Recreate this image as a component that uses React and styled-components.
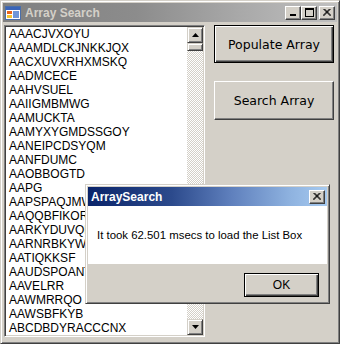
import React from "react";
import styled, { createGlobalStyle } from "styled-components";

const items = [
  "AAACJVXOYU", "AAAMDLCKJNKKJQX", "AACXUVXRHXMSKQ", "AADMCECE", "AAHVSUEL",
  "AAIIGMBMWG", "AAMUCKTA", "AAMYXYGMDSSGOY", "AANEIPCDSYQM", "AANFDUMC",
  "AAOBBOGTD", "AAPG", "AAPSPAQJMWX", "AAQQBFIKORTU", "AARKYDUVQLEP",
  "AARNRBKYWQZ", "AATIQKKSF", "AAUDSPOANTFK", "AAVELRR", "AAWMRRQO",
  "AAWSBFKYB", "ABCDBDYRACCCNX",
];

const Global = createGlobalStyle`
  html, body { margin: 0; padding: 0; background: #d4d0c8; }
  * { box-sizing: border-box; }
`;

const Stage = styled.div`position: relative;width: 340px;height: 344px;overflow: hidden;`;

const Frame = styled.div`
  width: ${(p) => p.$w}px;height: ${(p) => p.$h}px;display: flex;flex-direction: column;
  background: #d4d0c8;padding: 2px;
  border: 1px solid;border-color: #d4d0c8 #404040 #404040 #d4d0c8;
  box-shadow: inset 1px 1px #fff, inset -1px -1px #808080;
`;

const Dialog = styled(Frame)`position: absolute;left: 85px;top: 184px;`;

const TitleBar = styled.div`
  height: ${(p) => p.$h}px;flex: none;display: flex;align-items: center;padding: 0 2px;
  background: ${(p) =>
    p.$active
      ? "linear-gradient(90deg, #0a246a 0%, #2c4a8c 35%, #5f80bd 60%, #8fb3e0 85%, #a6caf0 100%)"
      : "linear-gradient(90deg, #808080 0%, #8c8c8c 40%, #a8a8a8 70%, #c0c0c0 100%)"};
  color: ${(p) => (p.$active ? "#fff" : "#d4d0c8")};
  font: bold 12px "Liberation Sans", Arial, sans-serif;
`;

const TitleText = styled.span`flex: 1;margin-left: ${(p) => p.$gap}px;white-space: nowrap;`;

const CapButton = styled.div`
  width: 16px;height: 14px;display: flex;align-items: center;justify-content: center;background: #d4d0c8;
  margin-left: ${(p) => p.$ml || 0}px;
  border: 1px solid;border-color: #fff #404040 #404040 #fff;box-shadow: inset -1px -1px #808080;
`;

const Body = styled.div`flex: 1;display: flex;padding: 3px 1px 0 1px;gap: 8px;min-height: 0;`;

const ListBox = styled.div`
  width: 201px;height: 312px;display: flex;background: #fff;
  border: 1px solid;border-color: #808080 #fff #fff #808080;
  box-shadow: inset 1px 1px #404040, inset -1px -1px #d4d0c8;padding: 1px;
`;

const Rows = styled.div`flex: 1;overflow: hidden;`;

const Row = styled.div`
  height: 14px;padding-left: 3px;white-space: nowrap;
  font: 12px/14px "Liberation Sans", Arial, sans-serif;color: #000;
`;

const ScrollBar = styled.div`width: 16px;display: flex;flex-direction: column;`;

const ScrollButton = styled.div`
  width: 16px;height: ${(p) => p.$h || 16}px;flex: none;display: flex;align-items: center;justify-content: center;
  background: #d4d0c8;border: 1px solid;border-color: #d4d0c8 #404040 #404040 #d4d0c8;
  box-shadow: inset 1px 1px #fff, inset -1px -1px #808080;
`;

const Track = styled.div`
  flex: 1;background-color: #fff;
  background-image: repeating-conic-gradient(#d4d0c8 0% 25%, #fff 0% 50%);background-size: 2px 2px;
`;

const Side = styled.div`display: flex;flex-direction: column;gap: 18px;padding-left: 1px;`;

const PushButton = styled.button`
  width: ${(p) => p.$w}px;height: ${(p) => p.$h}px;background: #d4d0c8;color: #000;padding: 0;
  font: ${(p) => p.$font};cursor: default;
  border: 1px solid;border-color: ${(p) => (p.$default ? "#000" : "#fff #404040 #404040 #fff")};
  box-shadow: ${(p) =>
    p.$default
      ? "inset 1px 1px #fff, inset -1px -1px #404040, inset -2px -2px #808080"
      : "inset -1px -1px #808080"};
`;

const Message = styled.div`
  height: 58px;flex: none;background: #fff;display: flex;align-items: center;padding: 0 0 0 9px;
  font: 11.4px "Liberation Sans", Arial, sans-serif;color: #000;
`;

const Footer = styled.div`flex: 1;display: flex;justify-content: flex-end;align-items: flex-start;padding: 9px 8px 0 0;`;

const Arrow = ({ up }) => (
  <svg width="7" height="4" viewBox="0 0 7 4">
    <path d={up ? "M3.5 0 L7 4 L0 4 Z" : "M0 0 L7 0 L3.5 4 Z"} fill="#000" />
  </svg>
);

const AppIcon = () => (
  <svg width="16" height="16" viewBox="0 0 16 16">
    <rect x="0.5" y="1.5" width="15" height="13" fill="#fff" stroke="#4a6ea8" />
    <rect x="1" y="2" width="14" height="3" fill="#3a64b8" />
    <rect x="2" y="6" width="5" height="3" fill="#e8641c" />
    <rect x="2" y="10" width="5" height="3" fill="#f4c430" />
    <rect x="8" y="6" width="6" height="7" fill="#6f96d8" />
  </svg>
);

const Glyph = ({ kind }) => {
  if (kind === "min") return <svg width="8" height="7" viewBox="0 0 8 7"><rect x="1" y="5" width="6" height="2" fill="#000" /></svg>;
  if (kind === "max") return <svg width="9" height="9" viewBox="0 0 9 9"><rect x="0.5" y="0.5" width="8" height="8" fill="none" stroke="#000" /><rect x="0" y="0" width="9" height="2" fill="#000" /></svg>;
  return (
    <svg width="8" height="7" viewBox="0 0 8 7">
      <path d="M0.5 0 L7.5 7 M7.5 0 L0.5 7 M1.5 0 L8 6.5 M6.5 0 L0 6.5" stroke="#000" strokeWidth="1" />
    </svg>
  );
};

export default function App() {
  return (
    <Stage>
      <Global />
      <Frame $w={340} $h={344}>
        <TitleBar $h={19}>
          <AppIcon />
          <TitleText $gap={4}>Array Search</TitleText>
          <CapButton><Glyph kind="min" /></CapButton>
          <CapButton><Glyph kind="max" /></CapButton>
          <CapButton $ml={2}><Glyph kind="close" /></CapButton>
        </TitleBar>
        <Body>
          <ListBox>
            <Rows>{items.map((s) => <Row key={s}>{s}</Row>)}</Rows>
            <ScrollBar>
              <ScrollButton><Arrow up /></ScrollButton>
              <ScrollButton $h={8} />
              <Track />
              <ScrollButton><Arrow /></ScrollButton>
            </ScrollBar>
          </ListBox>
          <Side>
            <PushButton $default $w={120} $h={38} $font={'12.5px "DejaVu Sans", Verdana, sans-serif'}>Populate Array</PushButton>
            <PushButton $w={120} $h={39} $font={'12.5px "DejaVu Sans", Verdana, sans-serif'}>Search Array</PushButton>
          </Side>
        </Body>
      </Frame>
      <Dialog $w={245} $h={120}>
        <TitleBar $active $h={19}>
          <TitleText $gap={1}>ArraySearch</TitleText>
          <CapButton><Glyph kind="close" /></CapButton>
        </TitleBar>
        <Message>It took 62.501 msecs to load the List Box</Message>
        <Footer>
          <PushButton $default $w={75} $h={24} $font={'12px "Liberation Sans", Arial, sans-serif'}>OK</PushButton>
        </Footer>
      </Dialog>
    </Stage>
  );
}
